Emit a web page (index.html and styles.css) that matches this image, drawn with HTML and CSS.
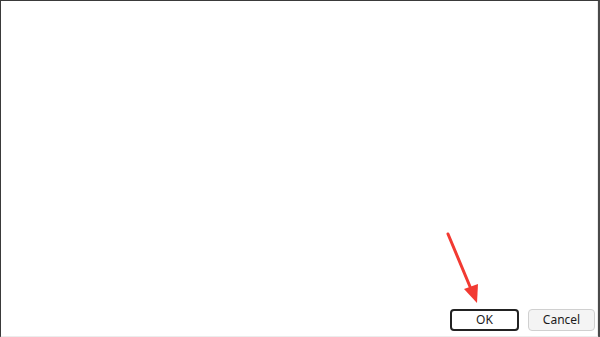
FILE: index.html
```html
<!DOCTYPE html>
<html>
<head>
<meta charset="utf-8">
<link rel="stylesheet" href="styles.css">
</head>
<body>
<div class="window">
  <div class="content"></div>
  <div class="footer">
    <button class="btn btn-primary">OK</button>
    <button class="btn">Cancel</button>
  </div>
  <svg class="arrow" width="40" height="80" viewBox="0 0 40 80">
    <line x1="7" y1="8" x2="30" y2="63" stroke="#f23a32" stroke-width="3" stroke-linecap="round"/>
    <polygon points="23,63 37,58 36,77" fill="#f23a32"/>
  </svg>
</div>
</body>
</html>
```
FILE: styles.css
```css
html, body {
  margin: 0;
  padding: 0;
  background: #ffffff;
}
.window {
  position: relative;
  width: 600px;
  height: 337px;
  box-sizing: border-box;
  border-top: 1px solid #3a3a3a;
  border-left: 1px solid #3a3a3a;
  border-right: 2px solid #4a4a4a;
  border-bottom: 1px solid #6d6d6d;
  display: flex;
  flex-direction: column;
  font-family: "Segoe UI", "Noto Sans", "Open Sans", sans-serif;
}
.content {
  flex: 1;
  border-bottom: 1px solid #ececec;
  border-right: 1px solid #ececec;
}
.footer {
  display: flex;
  justify-content: flex-end;
  gap: 9px;
  padding: 0 2px 5px 0;
  margin-top: -28px;
  border-right: 1px solid #ececec;
}
.btn {
  width: 67px;
  height: 22px;
  box-sizing: border-box;
  border: 1px solid #d0d0d0;
  border-radius: 4px;
  background: #f4f4f4;
  font-family: inherit;
  font-size: 12px;
  color: #1b1b1b;
  padding: 0;
  line-height: 18px;
}
.btn-primary {
  width: 69px;
  border: 2px solid #222222;
  background: #ffffff;
}
.arrow {
  position: absolute;
  left: 440px;
  top: 225px;
}
```
